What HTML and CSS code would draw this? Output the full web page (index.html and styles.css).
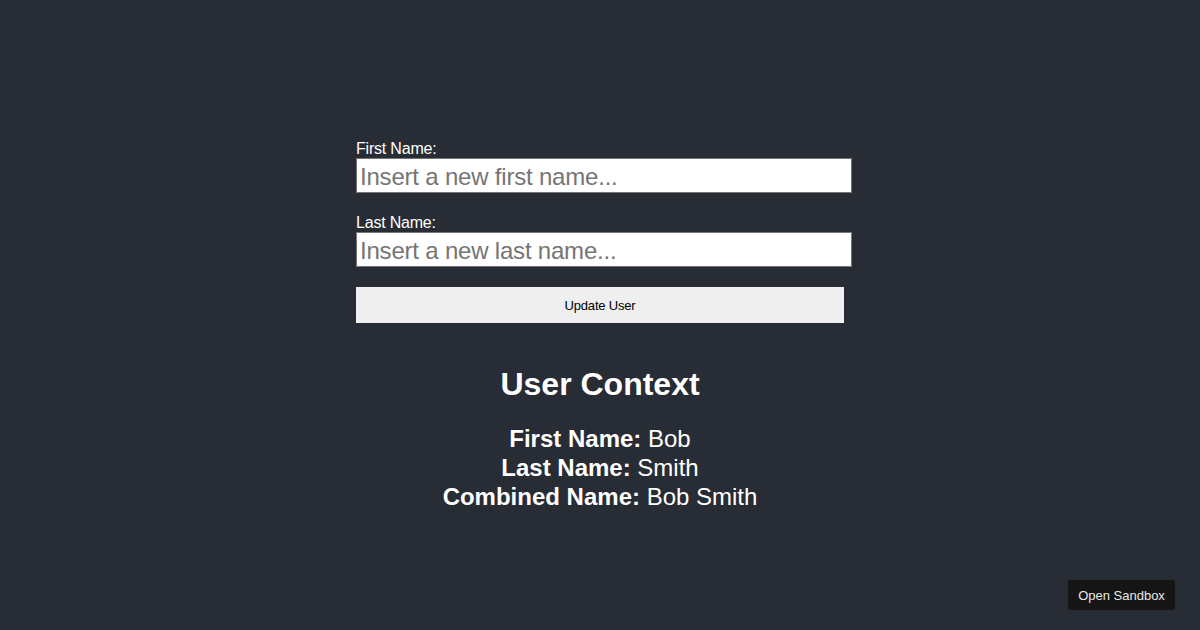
FILE: index.html
```html
<!DOCTYPE html>
<html lang="en">
<head>
<meta charset="utf-8">
<title>User Context</title>
<link rel="stylesheet" href="styles.css">
</head>
<body>
<div class="app">
  <form class="form">
    <div class="field">
      <label class="label" for="first">First Name:</label>
      <input class="input" id="first" type="text" placeholder="Insert a new first name...">
    </div>
    <div class="field">
      <label class="label" for="last">Last Name:</label>
      <input class="input" id="last" type="text" placeholder="Insert a new last name...">
    </div>
    <button class="submit" type="button">Update User</button>
  </form>
  <h2 class="title">User Context</h2>
  <div class="info">
    <div class="row"><strong>First Name:</strong> Bob</div>
    <div class="row"><strong>Last Name:</strong> Smith</div>
    <div class="row"><strong>Combined Name:</strong> Bob Smith</div>
  </div>
</div>
<a class="sandbox" href="#">Open Sandbox</a>
</body>
</html>
```

FILE: styles.css
```css
html, body {
  margin: 0;
  padding: 0;
  height: 100%;
}
body {
  background: #282c34;
  color: #ffffff;
  font-family: "Liberation Sans", Arial, sans-serif;
}
.app {
  display: flex;
  flex-direction: column;
  align-items: center;
  padding-top: 139px;
}
.form {
  width: 488px;
  display: flex;
  flex-direction: column;
}
.field {
  display: flex;
  flex-direction: column;
  margin-bottom: 20px;
}
.label {
  font-size: 16px;
  line-height: 19px;
  letter-spacing: -0.2px;
}
.input {
  width: 100%;
  box-sizing: content-box;
  height: 29px;
  line-height: 29px;
  padding: 3px 3px 1px;
  border: 1px solid #767676;
  margin: 0;
  font-family: "Liberation Sans", Arial, sans-serif;
  font-size: 24px;
  letter-spacing: -0.2px;
  color: #000;
  background: #fff;
  outline: none;
}
.input::placeholder {
  color: #757575;
}
.submit {
  height: 36px;
  width: 100%;
  margin: 0;
  border: none;
  background: #efefef;
  color: #000;
  font-family: "Liberation Sans", Arial, sans-serif;
  font-size: 13px;
  letter-spacing: -0.2px;
}
.title {
  margin: 43px 0 21px;
  font-size: 32px;
  line-height: 37px;
  font-weight: bold;
}
.info {
  text-align: center;
  font-size: 24px;
  line-height: 29px;
}
.row strong {
  font-weight: bold;
}
.sandbox {
  position: fixed;
  right: 24px;
  bottom: 19px;
  box-sizing: border-box;
  width: 109px;
  height: 32px;
  display: flex;
  align-items: center;
  justify-content: center;
  background: #151515;
  border: 1px solid #2b2b2b;
  border-radius: 4px;
  color: #e8e8e8;
  font-size: 13px;
  text-decoration: none;
}
```
